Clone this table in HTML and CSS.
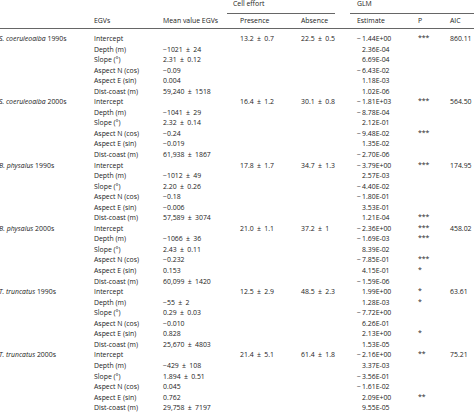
FILE: index.html
```html
<!DOCTYPE html>
<html>
<head>
<meta charset="utf-8">
<link rel="stylesheet" href="styles.css">
</head>
<body>
<table class="tbl">
<colgroup>
<col class="c-sp"><col class="c-egv"><col class="c-mean"><col class="c-pres"><col class="c-abs"><col class="c-est"><col class="c-p"><col class="c-aic">
</colgroup>
<thead>
<tr class="h1">
<td></td><td></td><td></td>
<td colspan="2"><div class="grp grp-cell">Cell effort</div></td>
<td colspan="3"><div class="grp grp-glm">GLM</div></td>
</tr>
<tr class="h2">
<td></td><td>EGVs</td><td>Mean value EGVs</td><td>Presence</td><td>Absence</td><td>Estimate</td><td>P</td><td>AIC</td>
</tr>
</thead>
<tbody>
<tr class="spacer"><td colspan="8"></td></tr>

<tr><td><i>S. coeruleoaiba</i> 1990s</td><td>Intercept</td><td></td><td>13.2<span class="pm">±</span>0.7</td><td>22.5<span class="pm">±</span>0.5</td><td><span class="m">−</span>1.44E+00</td><td>***</td><td>860.11</td></tr>
<tr><td></td><td>Depth (m)</td><td>−1021<span class="pm">±</span>24</td><td></td><td></td><td><span class="m"></span>2.36E-04</td><td></td><td></td></tr>
<tr><td></td><td>Slope (°)</td><td>2.31<span class="pm">±</span>0.12</td><td></td><td></td><td><span class="m"></span>6.69E-04</td><td></td><td></td></tr>
<tr><td></td><td>Aspect N (cos)</td><td>−0.09</td><td></td><td></td><td><span class="m">−</span>6.43E-02</td><td></td><td></td></tr>
<tr><td></td><td>Aspect E (sin)</td><td>0.004</td><td></td><td></td><td><span class="m"></span>1.18E-03</td><td></td><td></td></tr>
<tr><td></td><td>Dist-coast (m)</td><td>59,240<span class="pm">±</span>1518</td><td></td><td></td><td><span class="m"></span>1.02E-06</td><td></td><td></td></tr>

<tr><td><i>S. coeruleoaiba</i> 2000s</td><td>Intercept</td><td></td><td>16.4<span class="pm">±</span>1.2</td><td>30.1<span class="pm">±</span>0.8</td><td><span class="m">−</span>1.81E+03</td><td>***</td><td>564.50</td></tr>
<tr><td></td><td>Depth (m)</td><td>−1041<span class="pm">±</span>29</td><td></td><td></td><td><span class="m">−</span>8.78E-04</td><td></td><td></td></tr>
<tr><td></td><td>Slope (°)</td><td>2.32<span class="pm">±</span>0.14</td><td></td><td></td><td><span class="m"></span>2.12E-01</td><td></td><td></td></tr>
<tr><td></td><td>Aspect N (cos)</td><td>−0.24</td><td></td><td></td><td><span class="m">−</span>9.48E-02</td><td>***</td><td></td></tr>
<tr><td></td><td>Aspect E (sin)</td><td>−0.019</td><td></td><td></td><td><span class="m"></span>1.35E-02</td><td></td><td></td></tr>
<tr><td></td><td>Dist-coast (m)</td><td>61,938<span class="pm">±</span>1867</td><td></td><td></td><td><span class="m">−</span>2.70E-06</td><td></td><td></td></tr>

<tr><td><i>B. physalus</i> 1990s</td><td>Intercept</td><td></td><td>17.8<span class="pm">±</span>1.7</td><td>34.7<span class="pm">±</span>1.3</td><td><span class="m">−</span>3.79E+00</td><td>***</td><td>174.95</td></tr>
<tr><td></td><td>Depth (m)</td><td>−1012<span class="pm">±</span>49</td><td></td><td></td><td><span class="m"></span>2.57E-03</td><td></td><td></td></tr>
<tr><td></td><td>Slope (°)</td><td>2.20<span class="pm">±</span>0.26</td><td></td><td></td><td><span class="m">−</span>4.40E-02</td><td></td><td></td></tr>
<tr><td></td><td>Aspect N (cos)</td><td>−0.18</td><td></td><td></td><td><span class="m">−</span>1.80E-01</td><td></td><td></td></tr>
<tr><td></td><td>Aspect E (sin)</td><td>−0.006</td><td></td><td></td><td><span class="m"></span>3.53E-01</td><td></td><td></td></tr>
<tr><td></td><td>Dist-coast (m)</td><td>57,589<span class="pm">±</span>3074</td><td></td><td></td><td><span class="m"></span>1.21E-04</td><td>***</td><td></td></tr>

<tr><td><i>B. physalus</i> 2000s</td><td>Intercept</td><td></td><td>21.0<span class="pm">±</span>1.1</td><td>37.2<span class="pm">±</span>1</td><td><span class="m">−</span>2.36E+00</td><td>***</td><td>458.02</td></tr>
<tr><td></td><td>Depth (m)</td><td>−1066<span class="pm">±</span>36</td><td></td><td></td><td><span class="m">−</span>1.69E-03</td><td>***</td><td></td></tr>
<tr><td></td><td>Slope (°)</td><td>2.43<span class="pm">±</span>0.11</td><td></td><td></td><td><span class="m"></span>8.39E-02</td><td></td><td></td></tr>
<tr><td></td><td>Aspect N (cos)</td><td>−0.232</td><td></td><td></td><td><span class="m">−</span>7.85E-01</td><td>***</td><td></td></tr>
<tr><td></td><td>Aspect E (sin)</td><td>0.153</td><td></td><td></td><td><span class="m"></span>4.15E-01</td><td>*</td><td></td></tr>
<tr><td></td><td>Dist-coast (m)</td><td>60,099<span class="pm">±</span>1420</td><td></td><td></td><td><span class="m">−</span>1.59E-06</td><td></td><td></td></tr>

<tr><td><i>T. truncatus</i> 1990s</td><td>Intercept</td><td></td><td>12.5<span class="pm">±</span>2.9</td><td>48.5<span class="pm">±</span>2.3</td><td><span class="m"></span>1.99E+00</td><td>*</td><td>63.61</td></tr>
<tr><td></td><td>Depth (m)</td><td>−55<span class="pm">±</span>2</td><td></td><td></td><td><span class="m"></span>1.28E-03</td><td>*</td><td></td></tr>
<tr><td></td><td>Slope (°)</td><td>0.29<span class="pm">±</span>0.03</td><td></td><td></td><td><span class="m">−</span>7.72E+00</td><td></td><td></td></tr>
<tr><td></td><td>Aspect N (cos)</td><td>−0.010</td><td></td><td></td><td><span class="m"></span>6.26E-01</td><td></td><td></td></tr>
<tr><td></td><td>Aspect E (sin)</td><td>0.828</td><td></td><td></td><td><span class="m"></span>2.13E+00</td><td>*</td><td></td></tr>
<tr><td></td><td>Dist-coast (m)</td><td>25,670<span class="pm">±</span>4803</td><td></td><td></td><td><span class="m"></span>1.53E-05</td><td></td><td></td></tr>

<tr><td><i>T. truncatus</i> 2000s</td><td>Intercept</td><td></td><td>21.4<span class="pm">±</span>5.1</td><td>61.4<span class="pm">±</span>1.8</td><td><span class="m">−</span>2.16E+00</td><td>**</td><td>75.21</td></tr>
<tr><td></td><td>Depth (m)</td><td>−429<span class="pm">±</span>108</td><td></td><td></td><td><span class="m"></span>3.37E-03</td><td></td><td></td></tr>
<tr><td></td><td>Slope (°)</td><td>1.894<span class="pm">±</span>0.51</td><td></td><td></td><td><span class="m">−</span>3.56E-01</td><td></td><td></td></tr>
<tr><td></td><td>Aspect N (cos)</td><td>0.045</td><td></td><td></td><td><span class="m">−</span>1.61E-02</td><td></td><td></td></tr>
<tr><td></td><td>Aspect E (sin)</td><td>0.762</td><td></td><td></td><td><span class="m"></span>2.09E+00</td><td>**</td><td></td></tr>
<tr><td></td><td>Dist-coast (m)</td><td>29,758<span class="pm">±</span>7197</td><td></td><td></td><td><span class="m"></span>9.55E-05</td><td></td><td></td></tr>
</tbody>
</table>
</body>
</html>
```
FILE: styles.css
```css
html, body {
  margin: 0;
  padding: 0;
  background: #fff;
  overflow: hidden;
}
body {
  font-family: "Open Sans", "DejaVu Sans", sans-serif;
  font-size: 6.9px;
  color: #222;
}
.tbl {
  border-collapse: collapse;
  border-spacing: 0;
  table-layout: fixed;
  width: 481px;
  margin-left: -1px;
}
.c-sp { width: 95px; }
.c-egv { width: 69px; }
.c-mean { width: 77px; }
.c-pres { width: 61px; }
.c-abs { width: 56px; }
.c-est { width: 61px; }
.c-p { width: 32px; }
.c-aic { width: 30px; }

.tbl td {
  padding: 0;
  white-space: nowrap;
  overflow: visible;
  vertical-align: middle;
  height: 10.55px;
  line-height: 10.55px;
}
.h1 td {
  height: 14px;
  vertical-align: top;
}
.grp {
  box-sizing: border-box;
  height: 14px;
  line-height: 8px;
  border-bottom: 1px solid #666;
}
.grp-cell {
  margin-left: -13px;
  margin-right: 22px;
  padding-left: 6px;
}
.grp-glm {
  margin-left: -7px;
  padding-left: 7px;
}
.h2 td {
  height: 14px;
  line-height: 14px;
  border-bottom: 1px solid #666;
}
.spacer td {
  height: 5px;
  line-height: 5px;
}
.pm {
  margin: 0 3.3px;
}
.m {
  display: inline-block;
  width: 5px;
}
```
